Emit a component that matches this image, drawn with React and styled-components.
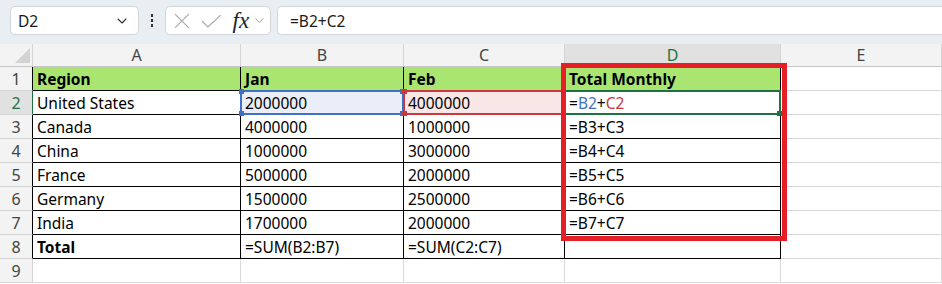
import styled, { createGlobalStyle } from 'styled-components';
import { ChevronDown } from 'lucide-react';

const GlobalStyle = createGlobalStyle`
  body {
    margin: 0;
    font-family: "Noto Sans", "Liberation Sans", sans-serif;
    background: #ffffff;
  }
`;

const COLS = ['A', 'B', 'C', 'D', 'E'];
const ACTIVE_COL = 'D';
const ACTIVE_ROW = 2;

const rows = [
  { cells: ['Region', 'Jan', 'Feb', 'Total Monthly', ''], header: true },
  { cells: ['United States', '2000000', '4000000', 'F2', ''] },
  { cells: ['Canada', '4000000', '1000000', '=B3+C3', ''] },
  { cells: ['China', '1000000', '3000000', '=B4+C4', ''] },
  { cells: ['France', '5000000', '2000000', '=B5+C5', ''] },
  { cells: ['Germany', '1500000', '2500000', '=B6+C6', ''] },
  { cells: ['India', '1700000', '2000000', '=B7+C7', ''] },
  { cells: ['Total', '=SUM(B2:B7)', '=SUM(C2:C7)', '', ''], boldFirst: true },
  { cells: ['', '', '', '', ''] },
];

const SEL = { 'B2': 'blue', 'C2': 'red', 'D2': 'active' };

const App = () => (
  <>
    <GlobalStyle />
    <ScPage>
      <ScToolbar>
        <ScNameBox>
          <span>D2</span>
          <ChevronDown size={16} strokeWidth={1.6} color="#333" />
        </ScNameBox>
        <ScDots>
          <i /><i /><i />
        </ScDots>
        <ScFxBox>
          <svg width="16" height="16" viewBox="0 0 16 16">
            <path d="M1 1 L15 15 M15 1 L1 15" stroke="#a8a8a8" strokeWidth="1.2" fill="none" />
          </svg>
          <svg width="21" height="14" viewBox="0 0 21 14">
            <path d="M1 7 L7 13 L20 1" stroke="#a8a8a8" strokeWidth="1.2" fill="none" />
          </svg>
          <ScFx>fx</ScFx>
          <ChevronDown size={15} strokeWidth={1.3} color="#8a8a8a" />
        </ScFxBox>
        <ScFormula>=B2+C2</ScFormula>
      </ScToolbar>

      <ScSheet>
        <ScCorner>
          <svg width="33" height="23" viewBox="0 0 33 23">
            <polygon points="30,4 30,19 15,19" fill="#d3d3d3" />
          </svg>
        </ScCorner>
        {COLS.map((c) => (
          <ScColHead key={c} $active={c === ACTIVE_COL}>{c}</ScColHead>
        ))}

        {rows.map((row, ri) => {
          const r = ri + 1;
          const inTable = r <= 8;
          return [
            <ScRowHead key={`h${r}`} $active={r === ACTIVE_ROW} $table={inTable}>{r}</ScRowHead>,
            ...row.cells.map((val, ci) => {
              const col = COLS[ci];
              const sel = SEL[`${col}${r}`];
              return (
                <ScCell
                  key={`${col}${r}`}
                  $table={inTable && ci < 4}
                  $fill={row.header && ci < 4}
                  $bold={row.header || (row.boldFirst && ci === 0)}
                  $sel={sel}
                >
                  {val === 'F2' ? (
                    <>=<ScRef $c="#3f72c6">B2</ScRef>+<ScRef $c="#c9393d">C2</ScRef></>
                  ) : val}
                  {sel === 'blue' || sel === 'red' ? (
                    <>
                      <ScHandle $sel={sel} $x="left" $y="top" />
                      <ScHandle $sel={sel} $x="right" $y="top" />
                      <ScHandle $sel={sel} $x="left" $y="bottom" />
                      <ScHandle $sel={sel} $x="right" $y="bottom" />
                    </>
                  ) : null}
                  {sel === 'active' ? <ScHandle $sel={sel} $x="right" $y="bottom" /> : null}
                </ScCell>
              );
            }),
          ];
        })}

        <ScAnnotation />
      </ScSheet>
    </ScPage>
  </>
);

export default App;

const SEL_COLORS = {
  blue: { line: '#3f72c6', bg: '#e9eef8' },
  red: { line: '#c9393d', bg: '#f9e7e7' },
  active: { line: '#1e7145', bg: '#ffffff' },
};

const ScPage = styled.div`
width: 942px;
height: 284px;
overflow: hidden;
`;

const ScToolbar = styled.div`
display: flex;
align-items: center;
height: 44px;
box-sizing: border-box;
padding: 0 0 3px 10px;
background: #e9eef2;
`;

const ScBox = styled.div`
height: 29px;
box-sizing: border-box;
background: #ffffff;
border: 1px solid #d2d6da;
border-radius: 5px;
display: flex;
align-items: center;
`;

const ScNameBox = styled(ScBox)`
width: 129px;
padding: 0 8px 0 7px;
justify-content: space-between;
font-size: 15.5px;
color: #1a1a1a;
`;

const ScDots = styled.div`
width: 26px;
display: flex;
flex-direction: column;
align-items: center;
gap: 2.5px;

i {
  display: block;
  width: 2.5px;
  height: 2.5px;
  background: #333;
}
`;

const ScFxBox = styled(ScBox)`
width: 106px;
padding: 0 3px 0 8px;
gap: 0;

svg:nth-child(1) { margin-right: 11px; }
svg:nth-child(2) { margin-right: 11px; }
`;

const ScFx = styled.span`
font-family: "Liberation Serif", "DejaVu Serif", serif;
font-style: italic;
font-size: 23px;
color: #222;
margin-right: 3px;
line-height: 1;
`;

const ScFormula = styled(ScBox)`
flex: 1;
margin-left: 6px;
padding-left: 12px;
border-right: none;
border-radius: 5px 0 0 5px;
font-size: 15.5px;
color: #1a1a1a;
`;

const ScSheet = styled.div`
position: relative;
display: grid;
grid-template-columns: 33px 208px 163px 161px 216px 1fr;
grid-template-rows: 23px repeat(9, 24px);
`;

const ScCorner = styled.div`
background: #f3f3f3;
border-right: 1px solid #d4d4d4;
border-bottom: 1px solid #c6c6c6;
box-sizing: border-box;

svg {
  display: block;
}
`;

const ScColHead = styled.div`
display: flex;
align-items: center;
justify-content: center;
box-sizing: border-box;
background: ${(p) => (p.$active ? '#e1e1e1' : '#f3f3f3')};
color: ${(p) => (p.$active ? '#1e7145' : '#444444')};
border-right: 1px solid #d4d4d4;
border-bottom: 1px solid #c6c6c6;
font-size: 16px;
`;

const ScRowHead = styled.div`
display: flex;
align-items: center;
justify-content: center;
box-sizing: border-box;
background: ${(p) => (p.$active ? '#e1e1e1' : '#f3f3f3')};
color: ${(p) => (p.$active ? '#1e7145' : '#444444')};
border-right: 1px solid ${(p) => (p.$active ? '#1e7145' : p.$table ? '#000000' : '#d4d4d4')};
border-bottom: 1px solid #d4d4d4;
font-size: 16px;
`;

const ScCell = styled.div`
position: relative;
z-index: ${(p) => (p.$sel ? 1 : 'auto')};
display: flex;
align-items: center;
box-sizing: border-box;
padding: 0 4px;
white-space: nowrap;
font-size: 15.5px;
font-weight: ${(p) => (p.$bold ? 700 : 400)};
color: #000000;
background: ${(p) => (p.$sel ? SEL_COLORS[p.$sel].bg : p.$fill ? '#aae572' : '#ffffff')};
border-right: 1px solid ${(p) => (p.$table ? '#000000' : '#dadada')};
border-bottom: 1px solid ${(p) => (p.$table ? '#000000' : '#dadada')};

${(p) => p.$sel && `
  &::after {
    content: '';
    position: absolute;
    top: -1px;
    left: -1px;
    right: -1px;
    bottom: -1px;
    border: 2px solid ${SEL_COLORS[p.$sel].line};
    pointer-events: none;
  }
`}
`;

const ScRef = styled.span`
color: ${(p) => p.$c};
`;

const ScHandle = styled.span`
position: absolute;
z-index: 2;
width: 5px;
height: 5px;
background: ${(p) => SEL_COLORS[p.$sel].line};
${(p) => p.$x}: -2px;
${(p) => p.$y}: -2px;
`;

const ScAnnotation = styled.div`
position: absolute;
z-index: 5;
left: 561px;
top: 19px;
width: 226px;
height: 178px;
box-sizing: border-box;
border: 5px solid #e61f26;
pointer-events: none;
`;
